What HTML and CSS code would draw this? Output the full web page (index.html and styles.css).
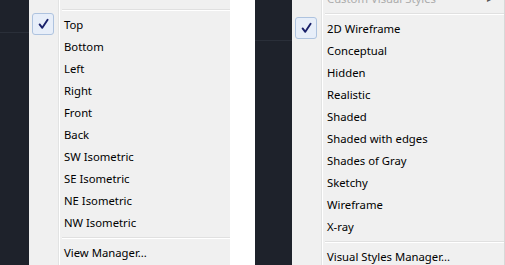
FILE: index.html
```html
<!DOCTYPE html>
<html lang="en">
<head>
    <meta charset="UTF-8">
    <title>View menus</title>
    <link rel="stylesheet" href="styles.css">
</head>
<body>

<div class="panels">
    <div class="panel panel-views">
        <div class="canvas"></div>
        <div class="menu">
            <div class="menu-item disabled"><span class="label">Named Views</span></div>
            <div class="separator"></div>
            <div class="menu-item checked">
                <span class="check">
                    <svg width="11" height="12" viewBox="0 0 11 12"><path d="M1.6 6.4 L4.3 9.8 L9.6 1.8" fill="none" stroke="#19206a" stroke-width="1.9" stroke-linecap="round" stroke-linejoin="round"/></svg>
                </span>
                <span class="label">Top</span>
            </div>
            <div class="menu-item"><span class="label">Bottom</span></div>
            <div class="menu-item"><span class="label">Left</span></div>
            <div class="menu-item"><span class="label">Right</span></div>
            <div class="menu-item"><span class="label">Front</span></div>
            <div class="menu-item"><span class="label">Back</span></div>
            <div class="menu-item"><span class="label">SW Isometric</span></div>
            <div class="menu-item"><span class="label">SE Isometric</span></div>
            <div class="menu-item"><span class="label">NE Isometric</span></div>
            <div class="menu-item"><span class="label">NW Isometric</span></div>
            <div class="separator"></div>
            <div class="menu-item"><span class="label">View Manager...</span></div>
        </div>
    </div>

    <div class="panel panel-styles">
        <div class="canvas"></div>
        <div class="menu">
            <div class="menu-item disabled submenu"><span class="label">Custom Visual Styles</span><span class="arrow">&#9656;</span></div>
            <div class="separator"></div>
            <div class="menu-item checked">
                <span class="check">
                    <svg width="11" height="12" viewBox="0 0 11 12"><path d="M1.6 6.4 L4.3 9.8 L9.6 1.8" fill="none" stroke="#19206a" stroke-width="1.9" stroke-linecap="round" stroke-linejoin="round"/></svg>
                </span>
                <span class="label">2D Wireframe</span>
            </div>
            <div class="menu-item"><span class="label">Conceptual</span></div>
            <div class="menu-item"><span class="label">Hidden</span></div>
            <div class="menu-item"><span class="label">Realistic</span></div>
            <div class="menu-item"><span class="label">Shaded</span></div>
            <div class="menu-item"><span class="label">Shaded with edges</span></div>
            <div class="menu-item"><span class="label">Shades of Gray</span></div>
            <div class="menu-item"><span class="label">Sketchy</span></div>
            <div class="menu-item"><span class="label">Wireframe</span></div>
            <div class="menu-item"><span class="label">X-ray</span></div>
            <div class="separator"></div>
            <div class="menu-item"><span class="label">Visual Styles Manager...</span></div>
        </div>
    </div>
</div>

</body>
</html>
```
FILE: styles.css
```css
body {
    margin: 0;
    background-color: white;
    font-family: "Noto Sans", "Open Sans", sans-serif;
    font-size: 11.3px;
    overflow: hidden;
}

.panels {
    display: flex;
    gap: 25px;
    height: 265px;
}

.panel {
    display: flex;
    height: 265px;
    overflow: hidden;
    background-color: #1e222b;
}

.panel-views {
    width: 230px;
}

.panel-styles {
    width: 250px;
}

.panel-views .canvas {
    width: 29px;
    background-image: linear-gradient(to bottom, transparent 32px, #2a2f39 32px, #2a2f39 33px, transparent 33px);
}

.panel-styles .canvas {
    width: 37px;
    background-image: linear-gradient(to bottom, transparent 40px, #2a2f39 40px, #2a2f39 41px, transparent 41px);
}

.canvas {
    flex-shrink: 0;
}

.menu {
    flex: 1;
    background-color: #f0f0f0;
    margin-top: -17px;
    padding-left: 3px;
    /* gutter line */
    background-image: linear-gradient(to right, transparent 29px, #e2e3e3 29px, #e2e3e3 30px, #ffffff 30px, #ffffff 31px, transparent 31px);
    box-shadow: 1px 0 2px rgba(0, 0, 0, 0.15);
}

.panel-styles .menu {
    margin-top: -13px;
    box-shadow: none;
    border-right: 1px solid #d8d8d8;
}

.menu-item {
    height: 22px;
    display: flex;
    align-items: center;
    position: relative;
    color: #000;
}

.menu-item .label {
    margin-left: 32px;
    white-space: nowrap;
}

.menu-item.disabled {
    color: #acacac;
}

.menu-item .arrow {
    margin-left: auto;
    margin-right: 12px;
    font-size: 9px;
    color: #555;
}

.check {
    position: absolute;
    left: 0;
    top: 0;
    width: 20px;
    height: 20px;
    border: 1px solid #aec3df;
    border-radius: 3px;
    background-color: #e7eef9;
    display: flex;
    align-items: center;
    justify-content: center;
}

.separator {
    height: 8px;
    margin-left: 30px;
    background-image: linear-gradient(to bottom, transparent 4px, #e0e0e0 4px, #e0e0e0 5px, #ffffff 5px, #ffffff 6px, transparent 6px);
}
```
